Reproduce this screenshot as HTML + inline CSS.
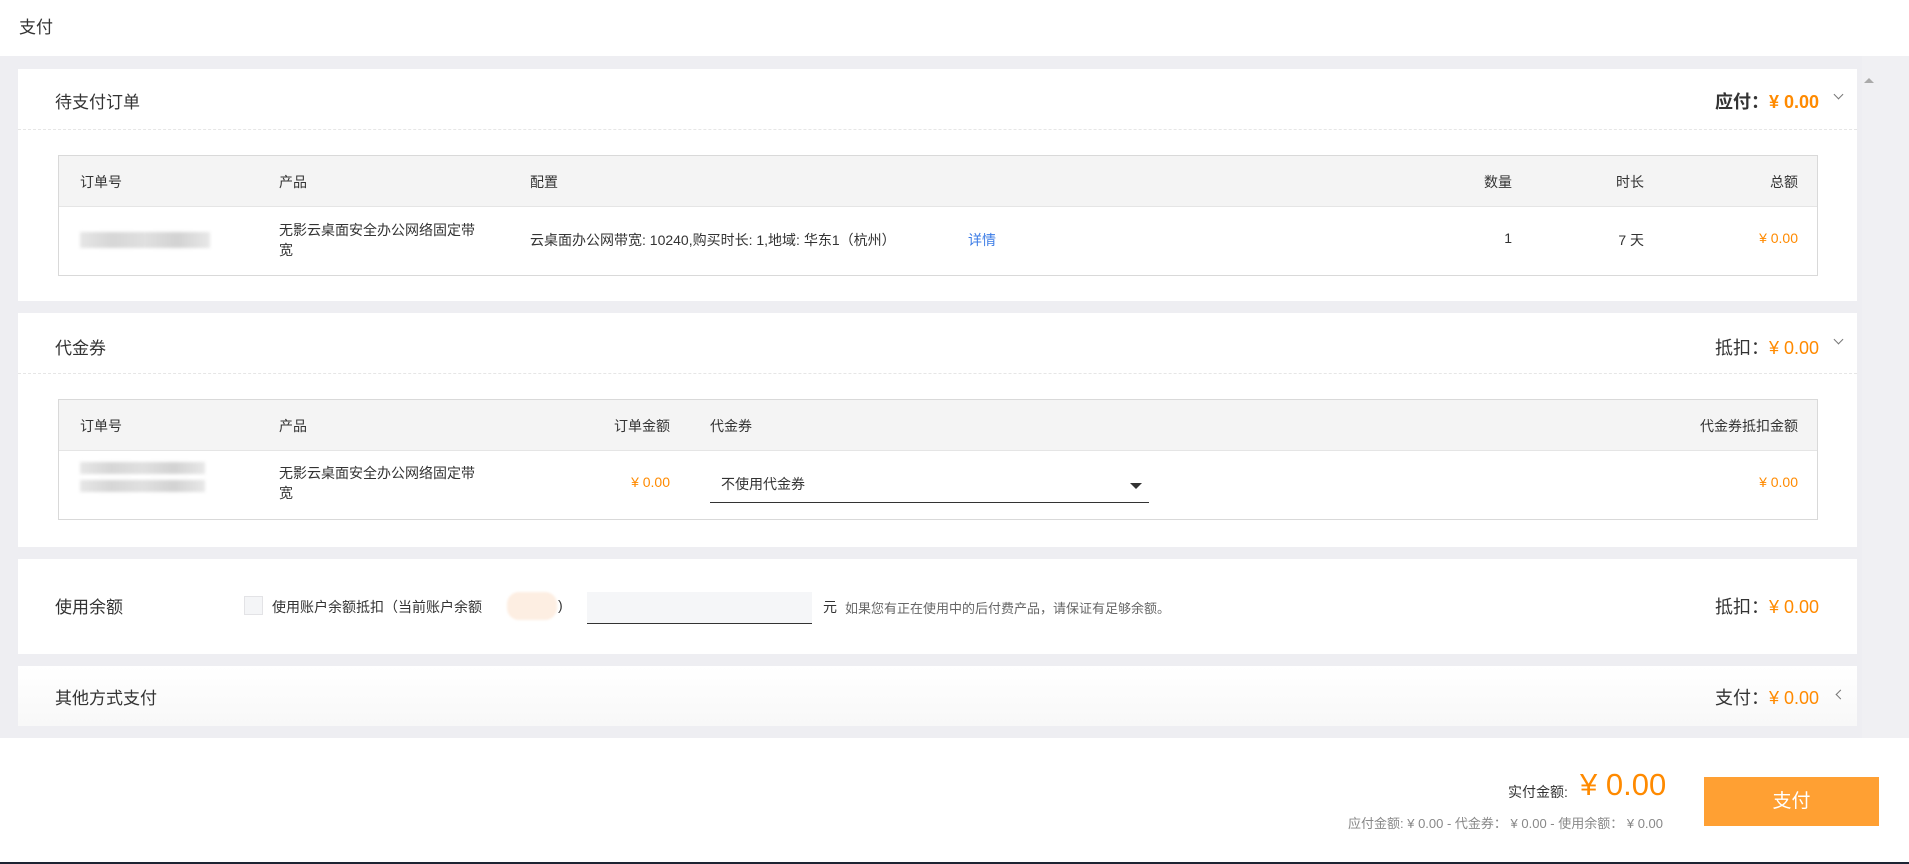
<!DOCTYPE html>
<html><head><meta charset="utf-8"><style>
*{box-sizing:border-box;margin:0;padding:0}
body{width:1909px;height:864px;overflow:hidden;background:#fff;font-family:"Liberation Sans","Noto Sans CJK SC",sans-serif;color:#333;position:relative}
.abs{position:absolute}
.gray{position:absolute;left:0;top:56px;width:1909px;height:682px;background:#eeeef2}
.card{position:absolute;left:18px;width:1839px;background:#fff}
.ct{position:absolute;left:37px;font-size:17px;color:#333}
.dash{position:absolute;left:0;right:0;border-top:1px dashed #e6e6e6}
.tbl{position:absolute;left:40px;width:1760px;border:1px solid #d9d9d9;font-size:14px}
.th{position:absolute;left:0;right:0;top:0;background:#f4f4f4;border-bottom:1px solid #e5e5e5}
.t{position:absolute;white-space:nowrap}
.or{color:#ff8a00}
.blur{position:absolute;height:16px;background:linear-gradient(90deg,#e6e6e6,#d6d6d6,#e0e0e0,#d2d2d2,#e8e8e8);filter:blur(1.5px)}
.chev{position:absolute;width:7px;height:7px;border-right:1px solid #777;border-bottom:1px solid #777}
</style></head><body>
<div class="abs" style="left:19px;top:13px;font-size:17px">支付</div>
<div class="gray"></div>
<div class="abs" style="left:1862px;top:56px;width:47px;height:682px;background:#f0f0f3"></div>
<div class="abs" style="left:1864px;top:78px;width:0;height:0;border-left:5px solid transparent;border-right:5px solid transparent;border-bottom:5px solid #aaa"></div>

<div class="card" style="top:69px;height:232px">
 <div class="ct" style="top:19px">待支付订单</div>
 <div class="t" style="right:38px;top:19px;font-size:18px;font-weight:bold"><span style="color:#333">应付：</span><span class="or">¥ 0.00</span></div>
 <div class="chev" style="right:15px;top:22px;transform:rotate(45deg)"></div>
 <div class="dash" style="top:60px"></div>
 <div class="tbl" style="top:86px;height:121px">
  <div class="th" style="height:51px"></div>
  <div class="t" style="left:21px;top:16px">订单号</div>
  <div class="t" style="left:220px;top:16px">产品</div>
  <div class="t" style="left:471px;top:16px">配置</div>
  <div class="t" style="right:305px;top:16px">数量</div>
  <div class="t" style="right:173px;top:16px">时长</div>
  <div class="t" style="right:19px;top:16px">总额</div>
  <div class="blur" style="left:21px;top:76px;width:130px"></div>
  <div class="t" style="left:220px;top:64px;line-height:20px">无影云桌面安全办公网络固定带<br>宽</div>
  <div class="t" style="left:471px;top:74px">云桌面办公网带宽: 10240,购买时长: 1,地域: 华东1（杭州）</div>
  <div class="t" style="left:909px;top:74px;color:#3c7ce6">详情</div>
  <div class="t" style="right:305px;top:74px">1</div>
  <div class="t" style="right:173px;top:74px">7 天</div>
  <div class="t or" style="right:19px;top:74px">¥ 0.00</div>
 </div>
</div>

<div class="card" style="top:313px;height:234px">
 <div class="ct" style="top:21px">代金券</div>
 <div class="t" style="right:38px;top:21px;font-size:18px"><span>抵扣：</span><span class="or">¥ 0.00</span></div>
 <div class="chev" style="right:15px;top:23px;transform:rotate(45deg)"></div>
 <div class="dash" style="top:60px"></div>
 <div class="tbl" style="top:86px;height:121px">
  <div class="th" style="height:51px"></div>
  <div class="t" style="left:21px;top:16px">订单号</div>
  <div class="t" style="left:220px;top:16px">产品</div>
  <div class="t" style="right:1147px;top:16px">订单金额</div>
  <div class="t" style="left:651px;top:16px">代金券</div>
  <div class="t" style="right:19px;top:16px">代金券抵扣金额</div>
  <div class="blur" style="left:21px;top:62px;width:125px;height:12px"></div>
  <div class="blur" style="left:21px;top:80px;width:125px;height:12px"></div>
  <div class="t" style="left:220px;top:63px;line-height:20px">无影云桌面安全办公网络固定带<br>宽</div>
  <div class="t or" style="right:1147px;top:74px">¥ 0.00</div>
  <div class="abs" style="left:651px;top:57px;width:439px;height:46px;border-bottom:1px solid #333"></div>
  <div class="t" style="left:662px;top:74px">不使用代金券</div>
  <div class="abs" style="left:1071px;top:83px;border-left:6px solid transparent;border-right:6px solid transparent;border-top:6px solid #333"></div>
  <div class="t or" style="right:19px;top:74px">¥ 0.00</div>
 </div>
</div>

<div class="card" style="top:559px;height:95px">
 <div class="ct" style="top:34px">使用余额</div>
 <div class="abs" style="left:226px;top:37px;width:19px;height:19px;border:1px solid #e3e3e6;background:#f4f5f7"></div>
 <div class="t" style="left:254px;top:38px;font-size:14px">使用账户余额抵扣（当前账户余额</div>
 <div class="abs" style="left:489px;top:33px;width:50px;height:28px;border-radius:12px;background:#fdeee2;filter:blur(1px)"></div>
 <div class="t" style="left:540px;top:38px;font-size:14px">)</div>
 <div class="abs" style="left:569px;top:33px;width:225px;height:32px;background:#f5f6f8;border-bottom:1px solid #333"></div>
 <div class="t" style="left:805px;top:38px;font-size:14px">元</div>
 <div class="t" style="left:827px;top:39px;font-size:13px;color:#666">如果您有正在使用中的后付费产品，请保证有足够余额。</div>
 <div class="t" style="right:38px;top:34px;font-size:18px"><span>抵扣：</span><span class="or">¥ 0.00</span></div>
</div>

<div class="card" style="top:666px;height:60px;background:linear-gradient(#fff,#f8f8f8)">
 <div class="ct" style="top:18px">其他方式支付</div>
 <div class="t" style="right:38px;top:18px;font-size:18px"><span>支付：</span><span class="or">¥ 0.00</span></div>
 <div class="chev" style="right:13px;top:25px;transform:rotate(135deg)"></div>
</div>

<div class="t" style="left:1508px;top:782px;font-size:14px">实付金额:</div>
<div class="t or" style="left:1580px;top:767px;font-size:31px">¥ 0.00</div>
<div class="t" style="right:246px;top:813px;font-size:13px;color:#888">应付金额: ¥ 0.00 - 代金券： ¥ 0.00 - 使用余额： ¥ 0.00</div>
<div class="abs" style="left:1704px;top:777px;width:175px;height:49px;background:#ffa033;color:#fff;font-size:19px;text-align:center;line-height:49px">支付</div>
<div class="abs" style="left:0;top:862px;width:1909px;height:2px;background:#1d2433"></div>
</body></html>
